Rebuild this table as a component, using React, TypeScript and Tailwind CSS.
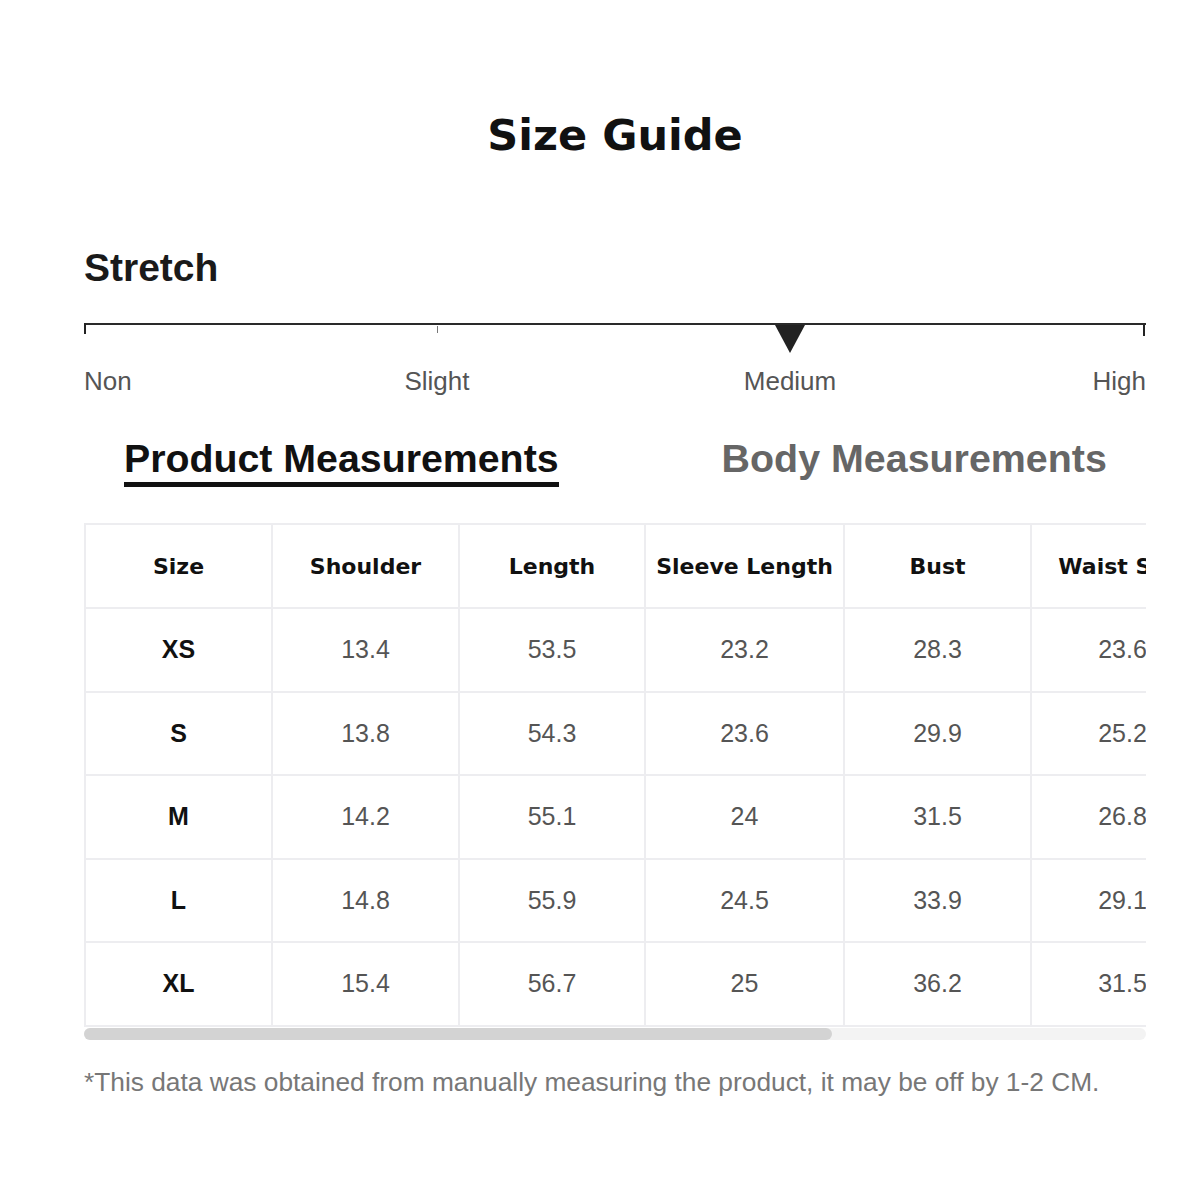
import React from "react";

const columns = [
  { key: "size", label: "Size", width: "w-[187px]" },
  { key: "shoulder", label: "Shoulder", width: "w-[187px]" },
  { key: "length", label: "Length", width: "w-[186px]" },
  { key: "sleeve", label: "Sleeve Length", width: "w-[199px]" },
  { key: "bust", label: "Bust", width: "w-[187px]" },
  { key: "waist", label: "Waist Size", width: "w-[183px]" },
  { key: "hip", label: "Hip Size", width: "w-[187px]" },
];

const rows = [
  { size: "XS", shoulder: "13.4", length: "53.5", sleeve: "23.2", bust: "28.3", waist: "23.6", hip: "33.5" },
  { size: "S", shoulder: "13.8", length: "54.3", sleeve: "23.6", bust: "29.9", waist: "25.2", hip: "35.0" },
  { size: "M", shoulder: "14.2", length: "55.1", sleeve: "24", bust: "31.5", waist: "26.8", hip: "36.6" },
  { size: "L", shoulder: "14.8", length: "55.9", sleeve: "24.5", bust: "33.9", waist: "29.1", hip: "39.0" },
  { size: "XL", shoulder: "15.4", length: "56.7", sleeve: "25", bust: "36.2", waist: "31.5", hip: "41.3" },
];

const arial = { fontFamily: '"Liberation Sans", Arial, sans-serif' };
const dejavu = { fontFamily: '"DejaVu Sans", sans-serif' };

export default function App() {
  return (
    <div className="h-[1200px] w-[1200px] overflow-hidden bg-white pl-[84px] pr-[54px]" style={arial}>
      {/* Title */}
      <h1 className="pt-[114px] text-center text-[43px] font-bold leading-[42px] text-[#111]" style={dejavu}>
        Size Guide
      </h1>

      {/* Stretch */}
      <h2 className="mt-[90px] text-[39px] font-bold leading-[44px] text-[#1a1a1a]">Stretch</h2>

      <div className="relative mt-[33px] h-[30px]">
        <div className="h-[2px] w-full bg-[#2a2a2a]" />
        <div className="absolute left-0 top-0 h-[11px] w-[2px] bg-[#222]" />
        <div className="absolute left-[353px] top-[3px] h-[7px] w-[1px] bg-[#777]" />
        <div className="absolute right-[1px] top-[2px] h-[11px] w-[2px] bg-[#222]" />
        <svg className="absolute left-[691px] top-[2px]" width="30" height="28" viewBox="0 0 30 28">
          <polygon points="0,0 30,0 15,28" fill="#222" />
        </svg>
      </div>

      <div className="relative mt-[13px] h-[30px] text-[26px] leading-[30px] text-[#555]">
        <span className="absolute left-0">Non</span>
        <span className="absolute left-[353px] -translate-x-1/2">Slight</span>
        <span className="absolute left-[706px] -translate-x-1/2">Medium</span>
        <span className="absolute right-0">High</span>
      </div>

      {/* Tabs */}
      <div className="mt-[40px] flex items-start">
        <button
          type="button"
          className="ml-[40px] border-b-[5px] border-[#111] pb-[2px] text-[39.3px] font-bold leading-[44px] text-[#111]">
          Product Measurements
        </button>
        <button type="button" className="ml-[163px] text-[39.4px] font-bold leading-[44px] text-[#666]">
          Body Measurements
        </button>
      </div>

      {/* Table */}
      <div className="mt-[36px] w-full overflow-hidden">
        <table className="w-[1316px] table-fixed border-collapse">
          <thead>
            <tr>
              {columns.map((col) => (
                <th
                  key={col.key}
                  className={`${col.width} h-[84px] border-2 border-[#ededf0] whitespace-nowrap text-center text-[22px] font-bold text-[#111]`}
                  style={dejavu}>
                  {col.label}
                </th>
              ))}
            </tr>
          </thead>
          <tbody>
            {rows.map((row) => (
              <tr key={row.size}>
                {columns.map((col) => (
                  <td
                    key={col.key}
                    className={`h-[83.5px] border-2 border-[#ededf0] text-center text-[25px] ${
                      col.key === "size" ? "font-bold text-[#111]" : "text-[#555]"
                    }`}>
                    {row[col.key as keyof typeof row]}
                  </td>
                ))}
              </tr>
            ))}
          </tbody>
        </table>
      </div>

      {/* Scrollbar */}
      <div className="mt-[1px] h-[12px] w-full rounded-full bg-[#f3f3f3]">
        <div className="h-full w-[748px] rounded-full bg-[#d3d3d3]" />
      </div>

      <p className="mt-[28px] text-[26.3px] leading-[28px] text-[#777]">
        *This data was obtained from manually measuring the product, it may be off by 1-2 CM.
      </p>
    </div>
  );
}
